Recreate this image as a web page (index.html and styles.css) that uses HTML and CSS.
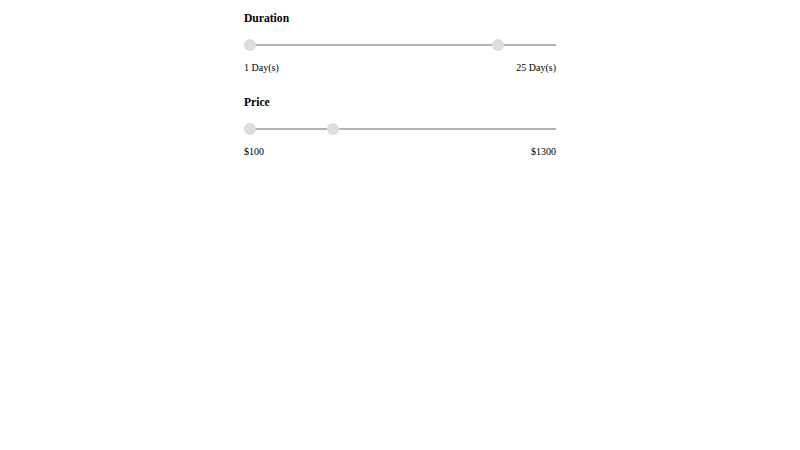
FILE: index.html
```html
<!DOCTYPE html>
<html>
<head>
<meta charset="utf-8">
<link rel="stylesheet" href="styles.css">
</head>
<body>
<div class="filters">
  <section class="filter">
    <h3 class="filter-title">Duration</h3>
    <div class="slider">
      <div class="track"></div>
      <span class="thumb" style="left:0%"></span>
      <span class="thumb" style="left:82.8%"></span>
    </div>
    <div class="range-labels"><span>1 Day(s)</span><span>25 Day(s)</span></div>
  </section>
  <section class="filter">
    <h3 class="filter-title">Price</h3>
    <div class="slider">
      <div class="track"></div>
      <span class="thumb" style="left:0%"></span>
      <span class="thumb" style="left:27.7%"></span>
    </div>
    <div class="range-labels"><span>$100</span><span>$1300</span></div>
  </section>
</div>
</body>
</html>
```
FILE: styles.css
```css
html, body {
  margin: 0;
  padding: 0;
  background: #fff;
}
body {
  font-family: "Liberation Serif", "Times New Roman", serif;
  color: #000;
}
.filters {
  width: 312px;
  margin: 0 auto;
  padding-top: 11px;
  display: flex;
  flex-direction: column;
  gap: 20px;
}
.filter {
  display: flex;
  flex-direction: column;
}
.filter-title {
  margin: 0;
  font-size: 11.6px;
  line-height: 16px;
  font-weight: bold;
}
.slider {
  position: relative;
  height: 12px;
  margin-top: 12px;
  margin-left: 6px;
  margin-right: 6px;
}
.track {
  position: absolute;
  left: -6px;
  right: -6px;
  top: 5px;
  height: 2px;
  background: #b3b3b3;
}
.thumb {
  position: absolute;
  top: 0;
  width: 12px;
  height: 12px;
  margin-left: -6px;
  border-radius: 50%;
  background: #dddddd;
}
.range-labels {
  display: flex;
  justify-content: space-between;
  margin-top: 10px;
  font-size: 10px;
  line-height: 14px;
}
```
